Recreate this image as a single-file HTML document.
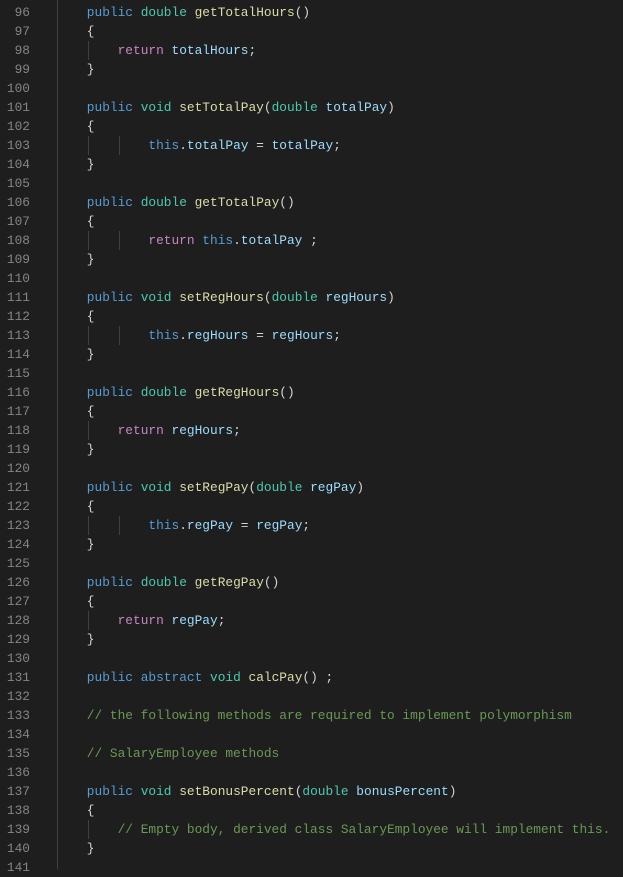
<!DOCTYPE html>
<html><head><style>
body{margin:0;background:#1e1e1e;width:623px;height:869px;overflow:hidden;position:relative;font-family:"Liberation Mono",monospace;font-size:12.83px;}
.r{position:absolute;left:0;height:19px;line-height:19px;width:623px;white-space:pre;}
.n{position:absolute;right:593px;color:#858585;}
.c{position:absolute;left:56px;color:#d4d4d4;}
.g{position:absolute;top:0;width:1px;height:19px;background:#404040;}
.k{color:#569cd6}.t{color:#4ec9b0}.f{color:#dcdcaa}.p{color:#c586c0}.v{color:#9cdcfe}.m{color:#6a9955}
#gl{position:absolute;left:57px;top:0;width:1px;height:869px;background:#404040;}
</style></head><body>
<div id="gl"></div>
<div class="r" style="top:3px"><span class="n">96</span><span class="c">    <span class="k">public</span> <span class="t">double</span> <span class="f">getTotalHours</span>()</span></div>
<div class="r" style="top:22px"><span class="n">97</span><span class="c">    {</span></div>
<div class="r" style="top:41px"><span class="n">98</span><div class="g" style="left:88px"></div><span class="c">        <span class="p">return</span> <span class="v">totalHours</span>;</span></div>
<div class="r" style="top:60px"><span class="n">99</span><span class="c">    }</span></div>
<div class="r" style="top:79px"><span class="n">100</span></div>
<div class="r" style="top:98px"><span class="n">101</span><span class="c">    <span class="k">public</span> <span class="t">void</span> <span class="f">setTotalPay</span>(<span class="t">double</span> <span class="v">totalPay</span>)</span></div>
<div class="r" style="top:117px"><span class="n">102</span><span class="c">    {</span></div>
<div class="r" style="top:136px"><span class="n">103</span><div class="g" style="left:88px"></div><div class="g" style="left:119px"></div><span class="c">            <span class="k">this</span>.<span class="v">totalPay</span> = <span class="v">totalPay</span>;</span></div>
<div class="r" style="top:155px"><span class="n">104</span><span class="c">    }</span></div>
<div class="r" style="top:174px"><span class="n">105</span></div>
<div class="r" style="top:193px"><span class="n">106</span><span class="c">    <span class="k">public</span> <span class="t">double</span> <span class="f">getTotalPay</span>()</span></div>
<div class="r" style="top:212px"><span class="n">107</span><span class="c">    {</span></div>
<div class="r" style="top:231px"><span class="n">108</span><div class="g" style="left:88px"></div><div class="g" style="left:119px"></div><span class="c">            <span class="p">return</span> <span class="k">this</span>.<span class="v">totalPay</span> ;</span></div>
<div class="r" style="top:250px"><span class="n">109</span><span class="c">    }</span></div>
<div class="r" style="top:269px"><span class="n">110</span></div>
<div class="r" style="top:288px"><span class="n">111</span><span class="c">    <span class="k">public</span> <span class="t">void</span> <span class="f">setRegHours</span>(<span class="t">double</span> <span class="v">regHours</span>)</span></div>
<div class="r" style="top:307px"><span class="n">112</span><span class="c">    {</span></div>
<div class="r" style="top:326px"><span class="n">113</span><div class="g" style="left:88px"></div><div class="g" style="left:119px"></div><span class="c">            <span class="k">this</span>.<span class="v">regHours</span> = <span class="v">regHours</span>;</span></div>
<div class="r" style="top:345px"><span class="n">114</span><span class="c">    }</span></div>
<div class="r" style="top:364px"><span class="n">115</span></div>
<div class="r" style="top:383px"><span class="n">116</span><span class="c">    <span class="k">public</span> <span class="t">double</span> <span class="f">getRegHours</span>()</span></div>
<div class="r" style="top:402px"><span class="n">117</span><span class="c">    {</span></div>
<div class="r" style="top:421px"><span class="n">118</span><div class="g" style="left:88px"></div><span class="c">        <span class="p">return</span> <span class="v">regHours</span>;</span></div>
<div class="r" style="top:440px"><span class="n">119</span><span class="c">    }</span></div>
<div class="r" style="top:459px"><span class="n">120</span></div>
<div class="r" style="top:478px"><span class="n">121</span><span class="c">    <span class="k">public</span> <span class="t">void</span> <span class="f">setRegPay</span>(<span class="t">double</span> <span class="v">regPay</span>)</span></div>
<div class="r" style="top:497px"><span class="n">122</span><span class="c">    {</span></div>
<div class="r" style="top:516px"><span class="n">123</span><div class="g" style="left:88px"></div><div class="g" style="left:119px"></div><span class="c">            <span class="k">this</span>.<span class="v">regPay</span> = <span class="v">regPay</span>;</span></div>
<div class="r" style="top:535px"><span class="n">124</span><span class="c">    }</span></div>
<div class="r" style="top:554px"><span class="n">125</span></div>
<div class="r" style="top:573px"><span class="n">126</span><span class="c">    <span class="k">public</span> <span class="t">double</span> <span class="f">getRegPay</span>()</span></div>
<div class="r" style="top:592px"><span class="n">127</span><span class="c">    {</span></div>
<div class="r" style="top:611px"><span class="n">128</span><div class="g" style="left:88px"></div><span class="c">        <span class="p">return</span> <span class="v">regPay</span>;</span></div>
<div class="r" style="top:630px"><span class="n">129</span><span class="c">    }</span></div>
<div class="r" style="top:649px"><span class="n">130</span></div>
<div class="r" style="top:668px"><span class="n">131</span><span class="c">    <span class="k">public</span> <span class="k">abstract</span> <span class="t">void</span> <span class="f">calcPay</span>() ;</span></div>
<div class="r" style="top:687px"><span class="n">132</span></div>
<div class="r" style="top:706px"><span class="n">133</span><span class="c">    <span class="m">// the following methods are required to implement polymorphism</span></span></div>
<div class="r" style="top:725px"><span class="n">134</span></div>
<div class="r" style="top:744px"><span class="n">135</span><span class="c">    <span class="m">// SalaryEmployee methods</span></span></div>
<div class="r" style="top:763px"><span class="n">136</span></div>
<div class="r" style="top:782px"><span class="n">137</span><span class="c">    <span class="k">public</span> <span class="t">void</span> <span class="f">setBonusPercent</span>(<span class="t">double</span> <span class="v">bonusPercent</span>)</span></div>
<div class="r" style="top:801px"><span class="n">138</span><span class="c">    {</span></div>
<div class="r" style="top:820px"><span class="n">139</span><div class="g" style="left:88px"></div><span class="c">        <span class="m">// Empty body, derived class SalaryEmployee will implement this.</span></span></div>
<div class="r" style="top:839px"><span class="n">140</span><span class="c">    }</span></div>
<div class="r" style="top:858px"><span class="n">141</span></div>
</body></html>
